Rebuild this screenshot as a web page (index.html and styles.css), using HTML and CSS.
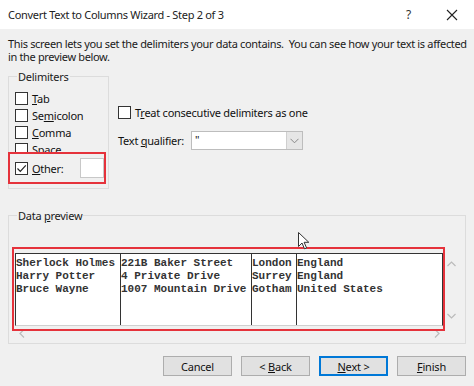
FILE: index.html
```html
<!DOCTYPE html>
<html lang="en">
<head>
  <meta charset="UTF-8" />
  <title>Convert Text to Columns Wizard - Step 2 of 3</title>
  <link rel="stylesheet" href="styles.css">
</head>
<body>
  <div class="dialog">
    <header class="titlebar">
      <span class="title">Convert Text to Columns Wizard - Step 2 of 3</span>
      <span class="ctrl help">?</span>
      <span class="ctrl close">
        <svg width="12" height="12" viewBox="0 0 12 12"><path d="M1 1 L11 11 M11 1 L1 11" stroke="#222" stroke-width="1.1" fill="none"/></svg>
      </span>
    </header>

    <p class="intro">This screen lets you set the delimiters your data contains.&nbsp; You can see how your text is affected in the preview below.</p>

    <div class="options">
      <fieldset class="group delims">
        <legend>Delimiters</legend>
        <label class="check"><span class="box"></span><span><u>T</u>ab</span></label>
        <label class="check"><span class="box"></span><span>Se<u>m</u>icolon</span></label>
        <label class="check"><span class="box"></span><span><u>C</u>omma</span></label>
        <label class="check"><span class="box"></span><span><u>S</u>pace</span></label>
        <div class="highlight">
          <label class="check other">
            <span class="box">
              <svg width="11" height="11" viewBox="0 0 11 11"><path d="M1.5 5.5 L4.3 8.3 L9.8 2.3" stroke="#222" stroke-width="1.2" fill="none"/></svg>
            </span>
            <span><u>O</u>ther:</span>
            <span class="other-input"></span>
          </label>
        </div>
      </fieldset>

      <div class="side">
        <label class="check"><span class="box"></span><span>T<u>r</u>eat consecutive delimiters as one</span></label>
        <div class="qualifier">
          <span class="q-label">Text <u>q</u>ualifier:</span>
          <span class="combo">
            <span class="combo-value">"</span>
            <span class="combo-btn">
              <svg width="9" height="6" viewBox="0 0 9 6"><path d="M0.5 0.8 L4.5 4.8 L8.5 0.8" stroke="#888" stroke-width="1" fill="none"/></svg>
            </span>
          </span>
        </div>
      </div>
    </div>

    <fieldset class="group preview-group">
      <legend>Data <u>p</u>review</legend>
      <div class="preview">
        <div class="preview-main">
          <div class="grid">
            <div class="col c1"><div>Sherlock Holmes</div><div>Harry Potter</div><div>Bruce Wayne</div></div>
            <div class="col c2"><div>221B Baker Street</div><div>4 Private Drive</div><div>1007 Mountain Drive</div></div>
            <div class="col c3"><div>London</div><div>Surrey</div><div>Gotham</div></div>
            <div class="col c4"><div>England</div><div>England</div><div>United States</div></div>
          </div>
          <div class="vscroll">
            <svg width="9" height="6" viewBox="0 0 9 6"><path d="M0.5 5 L4.5 1 L8.5 5" stroke="#bbb" stroke-width="1.2" fill="none"/></svg>
            <svg width="9" height="6" viewBox="0 0 9 6"><path d="M0.5 1 L4.5 5 L8.5 1" stroke="#bbb" stroke-width="1.2" fill="none"/></svg>
          </div>
        </div>
        <div class="hscroll">
          <svg width="6" height="9" viewBox="0 0 6 9"><path d="M5 0.5 L1 4.5 L5 8.5" stroke="#bbb" stroke-width="1.2" fill="none"/></svg>
          <svg width="6" height="9" viewBox="0 0 6 9"><path d="M1 0.5 L5 4.5 L1 8.5" stroke="#bbb" stroke-width="1.2" fill="none"/></svg>
        </div>
        <div class="annot"></div>
        <svg class="cursor" width="12" height="18" viewBox="0 0 12 18"><path d="M0.5 0.5 L0.5 14.5 L4 11 L6.5 16.8 L8.6 15.9 L6.1 10.3 L10.8 10.3 Z" fill="#fff" stroke="#333" stroke-width="1"/></svg>
      </div>
    </fieldset>

    <div class="buttons">
      <button>Cancel</button>
      <button>&lt; <u>B</u>ack</button>
      <button class="default"><u>N</u>ext &gt;</button>
      <button><u>F</u>inish</button>
    </div>
  </div>
</body>
</html>
```

FILE: styles.css
```css
* {
  box-sizing: border-box;
}
body, html {
  margin: 0;
  padding: 0;
}
body {
  width: 474px;
  height: 386px;
  overflow: hidden;
  background: #f0f0f0;
  color: #111;
  font-family: "Noto Sans", "Open Sans", sans-serif;
  font-size: 11px;
  line-height: 13px;
  letter-spacing: -0.25px;
}
u {
  text-decoration-thickness: 1px;
  text-underline-offset: 1px;
}
.titlebar {
  height: 29px;
  background: #fff;
  display: flex;
  align-items: center;
  padding-left: 8px;
}
.title {
  flex: 1;
  font-size: 11px;
  letter-spacing: -0.3px;
  color: #222;
}
.ctrl {
  width: 43px;
  text-align: center;
  display: flex;
  justify-content: center;
  align-items: center;
}
.help {
  font-size: 12px;
  color: #333;
}
.close {
  width: 44px;
}
.intro {
  margin: 0;
  padding: 8px 2px 0 8px;
  letter-spacing: -0.34px;
  color: #1a1a1a;
}
.options {
  display: flex;
  margin-top: 7px;
  padding: 0 8px;
}
.group {
  margin: 0;
  min-width: 0;
  border: 1px solid #dcdcdc;
  padding: 0;
}
.group legend {
  padding: 0 1px;
  margin-left: 2px;
  line-height: 13px;
  color: #1a1a1a;
}
.delims {
  width: 101px;
  padding: 7px 0 4px 6px;
}
.check {
  display: flex;
  align-items: center;
  gap: 4px;
  height: 17px;
  white-space: nowrap;
}
.box {
  width: 13px;
  height: 13px;
  border: 1px solid #333;
  background: #fff;
  display: flex;
  align-items: center;
  justify-content: center;
  flex: none;
}
.highlight {
  position: relative;
  margin: -6px 0 0 -7px;
  width: 98px;
  border: 2px solid #e5323b;
  background: #f0f0f0;
  padding: 4px 0 4px 5px;
}
.check.other {
  height: 20px;
}
.other-input {
  margin-left: 12px;
  width: 28px;
  height: 20px;
  background: #fff;
  border: 1px solid #c8c8c8;
}
.side {
  padding-top: 34px;
  margin-left: 9px;
}
.qualifier {
  display: flex;
  align-items: center;
  margin-top: 10px;
}
.q-label {
  width: 73px;
}
.combo {
  display: flex;
  width: 112px;
  height: 19px;
  background: #fff;
  border: 1px solid #bdbdbd;
}
.combo-value {
  flex: 1;
  padding-left: 3px;
  line-height: 15px;
}
.combo-btn {
  width: 16px;
  background: #e6e6e6;
  border-left: 1px solid #cfcfcf;
  display: flex;
  align-items: center;
  justify-content: center;
}
.preview-group {
  margin: 20px 8px 0;
  padding: 31px 6px 3px 6px;
}
.preview {
  position: relative;
}
.preview-main {
  display: flex;
}
.grid {
  display: flex;
  width: 429px;
  height: 73px;
  background: #fff;
  border: 1px solid #333;
  border-bottom-color: #d0d0d0;
  font-family: "Liberation Mono", "Courier New", monospace;
  font-size: 11px;
  font-weight: bold;
  letter-spacing: 0;
  line-height: 13px;
  color: #333;
}
.col {
  padding-top: 3px;
  border-right: 1px solid #333;
  white-space: nowrap;
  overflow: hidden;
}
.c1 { width: 105px; }
.c2 { width: 131px; }
.c3 { width: 45px; }
.c4 { flex: 1; border-right: none; }
.vscroll {
  width: 16px;
  display: flex;
  flex-direction: column;
  justify-content: space-between;
  align-items: center;
  padding: 8px 0 7px;
}
.hscroll {
  height: 14px;
  width: 429px;
  display: flex;
  justify-content: space-between;
  align-items: center;
  padding: 0 4px;
}
.annot {
  position: absolute;
  left: -3px;
  top: -6px;
  width: 433px;
  height: 84px;
  border: 2px solid #e5323b;
}
.cursor {
  position: absolute;
  left: 283px;
  top: -21px;
}
.buttons {
  display: flex;
  justify-content: flex-end;
  gap: 9px;
  margin-top: 12px;
  padding-right: 8px;
}
.buttons button {
  width: 69px;
  height: 20px;
  padding: 0;
  background: #e1e1e1;
  border: 1px solid #adadad;
  font-family: "Noto Sans", "Open Sans", sans-serif;
  font-size: 11px;
  letter-spacing: -0.2px;
  color: #111;
}
.buttons .default {
  border: 2px solid #0078d7;
}
```
